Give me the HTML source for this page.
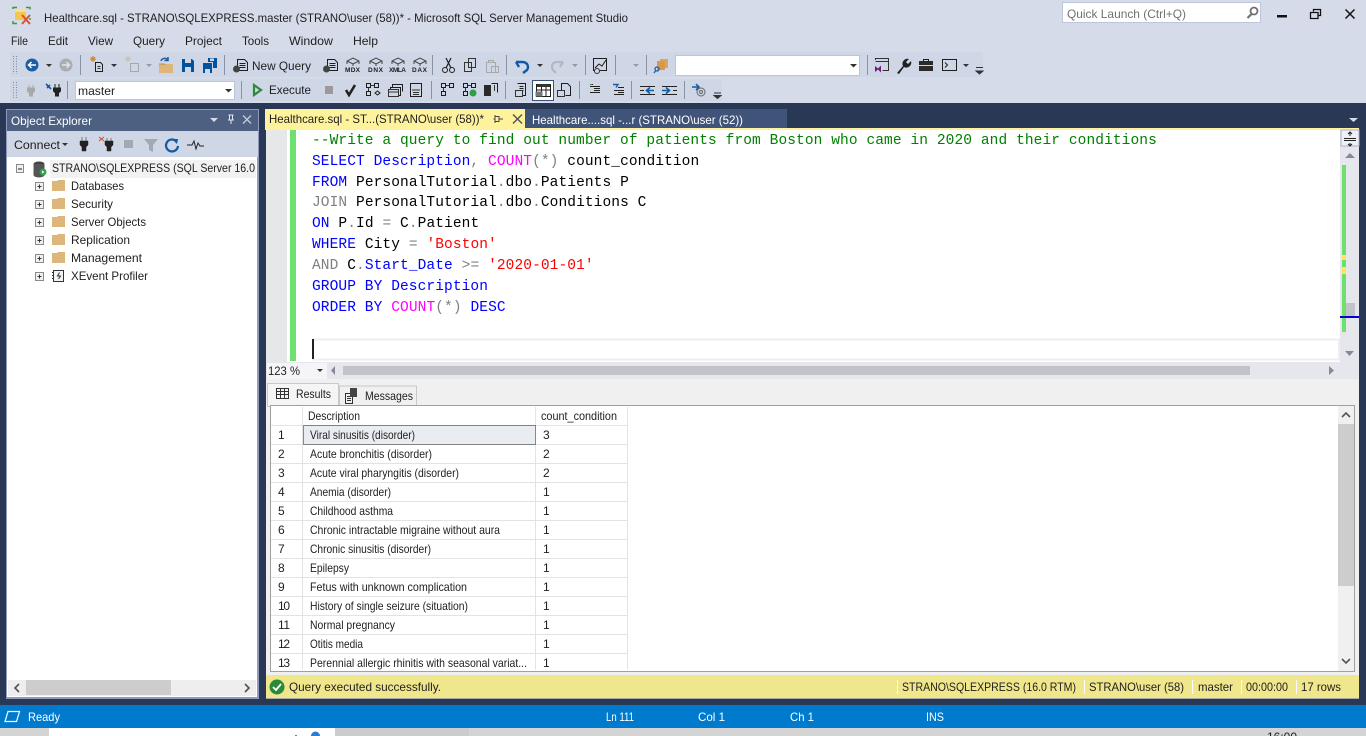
<!DOCTYPE html>
<html><head><meta charset="utf-8"><style>
html,body{margin:0;padding:0;width:1366px;height:736px;overflow:hidden;background:#293955}
svg{display:block}
text{font-family:"Liberation Sans",sans-serif;font-size:12px;fill:#1e1e1e;white-space:pre}
.c text,text.c{font-family:"Liberation Mono",monospace;font-size:14.52px;fill:#000;letter-spacing:.09px}
.k{fill:#0000ff}.g{fill:#808080}.m{fill:#ff00ff}.r{fill:#ff0000}
.w text{fill:#fff}
.ic{fill:none;stroke:#1e1e1e;stroke-width:1}
.gr{fill:none;stroke:#a8a8a8;stroke-width:1}
</style></head><body>
<svg width="1366" height="736" viewBox="0 0 1366 736" xmlns="http://www.w3.org/2000/svg">
<!-- chrome -->
<rect width="1366" height="103" fill="#d6dbe9"/>
<rect y="103" width="1366" height="603" fill="#293955"/>
<rect y="705" width="1366" height="23" fill="#007acc"/>
<rect y="728" width="1366" height="8" fill="#d4d4d4"/>
<rect x="49" y="728" width="286" height="8" fill="#fff"/>
<rect x="335" y="728" width="134" height="8" fill="#ccc"/>
<path d="M311 736a4 4 0 0 1 9 0z" fill="#2a7bd8"/>
<rect x="295" y="735" width="2" height="1" fill="#e0503c"/>
<text x="1267" y="741" font-size="11">16:00</text>

<!-- app icon -->
<g><path d="M13 9v-1.500h4M26 7.500h4v2M13 21v2.500h4M30 18v2" stroke="#3c9a3c" stroke-width="1.500" fill="none"/>
<rect x="15" y="9" width="11" height="11" fill="#f3c64d"/><rect x="15" y="9" width="11" height="3" fill="#f9de8e"/>
<path d="M22 15l8 9M30 15l-8 9" stroke="#d9532c" stroke-width="2"/></g>
<text x="44" y="22" textLength="584" lengthAdjust="spacingAndGlyphs">Healthcare.sql - STRANO\SQLEXPRESS.master (STRANO\user (58))* - Microsoft SQL Server Management Studio</text>

<!-- quick launch -->
<rect x="1062.500" y="2.500" width="198" height="20" fill="#fff" stroke="#bdc5d8"/>
<text x="1067" y="18" textLength="119" lengthAdjust="spacingAndGlyphs" style="fill:#717171">Quick Launch (Ctrl+Q)</text>
<circle cx="1254" cy="11" r="3.500" fill="none" stroke="#717171" stroke-width="1.800"/><path d="M1251.500 14l-4 4" stroke="#717171" stroke-width="2.200"/>
<rect x="1277" y="15" width="10" height="2.500" fill="#111"/>
<path d="M1313.500 11.500v-2h7v6h-2M1310.500 12.500h7.500v6h-7.500z" fill="none" stroke="#111" stroke-width="1.300"/>
<path d="M1345.500 9.500l9 9M1354.500 9.500l-9 9" stroke="#111" stroke-width="1.500"/>

<!-- menu -->
<g>
<text x="11" y="45" textLength="17" lengthAdjust="spacingAndGlyphs">File</text><text x="48" y="45" textLength="20" lengthAdjust="spacingAndGlyphs">Edit</text><text x="88" y="45" textLength="25" lengthAdjust="spacingAndGlyphs">View</text><text x="133" y="45" textLength="32" lengthAdjust="spacingAndGlyphs">Query</text><text x="185" y="45" textLength="37" lengthAdjust="spacingAndGlyphs">Project</text><text x="242" y="45" textLength="27" lengthAdjust="spacingAndGlyphs">Tools</text><text x="289" y="45" textLength="44" lengthAdjust="spacingAndGlyphs">Window</text><text x="353" y="45" textLength="25" lengthAdjust="spacingAndGlyphs">Help</text>
</g>

<!-- toolbars -->
<rect x="10" y="52" width="973" height="25" fill="#cfd6e5"/>
<rect x="10" y="79" width="712" height="22" fill="#cfd6e5"/>
<path d="M13.500 56v18M16.500 56v18M13.500 82v17M16.500 82v17" stroke="#7f8aa3" stroke-dasharray="1 1.500"/>

<!-- row 1 icons -->
<circle cx="32" cy="65" r="6.500" fill="#1c5ea6"/><path d="M36 65h-7M31.500 62l-3 3 3 3" stroke="#fff" stroke-width="1.400" fill="none"/>
<path d="M46 64h6l-3 3z" fill="#333"/>
<circle cx="66" cy="65" r="6.500" fill="#a9adb4"/><path d="M62 65h7M66.500 62l3 3-3 3" stroke="#e6e6e6" stroke-width="1.400" fill="none"/>
<path d="M80.500 55v20" stroke="#8a93a6"/>
<path d="M95.500 62.500h5l2 2v7h-7z" class="ic"/><path d="M90 59h6M93 56v6M91 57l4 4M95 57l-4 4" stroke="#c98a2b"/><path d="M97.500 66.500h3M97.500 68.500h3" stroke="#333"/>
<path d="M111 64h6l-3 3z" fill="#333"/>
<path d="M130.500 63.500h8v8h-8z" class="gr"/><path d="M125 59h6M128 56v6M126 57l4 4M130 57l-4 4" stroke="#c9c3b2"/>
<path d="M146 64h6l-3 3z" fill="#9a9a9a"/>
<path d="M159 64h14v9h-14z" fill="#dcb67a"/><path d="M159 64h5l1 1" stroke="#b9924f" fill="none"/><path d="M161 61a4 4 0 0 1 7-1M168 57v3.500h-3.500" stroke="#1c5ea6" stroke-width="1.500" fill="none"/>
<path d="M182 59h10l2 2v11h-12z" fill="#00539c"/><rect x="185" y="59" width="6" height="4" fill="#cfd6e5"/><rect x="185" y="67" width="6" height="5" fill="#cfd6e5"/>
<path d="M203 63h9v10h-9z" fill="#00539c"/><path d="M208 58h9v10h-4v-6h-5z" fill="#00539c"/><rect x="210" y="58.500" width="4" height="2.500" fill="#cfd6e5"/><rect x="205" y="69" width="5" height="4" fill="#cfd6e5"/>
<path d="M224.500 55v20" stroke="#8a93a6"/>
<path d="M237.500 59.500h7l3 3v8h-10z" class="ic"/><path d="M239.500 63.500h6M239.500 65.500h6M239.500 67.500h6" stroke="#1e1e1e"/><ellipse cx="236.500" cy="69" rx="3.500" ry="3.500" fill="#444"/>
<text x="252" y="70" textLength="59" lengthAdjust="spacingAndGlyphs">New Query</text>
<path d="M327.500 59.500h7l3 3v8h-10z" class="ic"/><path d="M329.500 63.500h6M329.500 65.500h6M329.500 67.500h6" stroke="#1e1e1e"/><ellipse cx="326.500" cy="69" rx="3.500" ry="3.500" fill="#444"/>
<g fill="none" stroke="#444"><path d="M347 64v-3l6-3 6 3v3M347 61l6 3 6-3M353 64v2"/><path d="M370 64v-3l6-3 6 3v3M370 61l6 3 6-3M376 64v2"/><path d="M392 64v-3l6-3 6 3v3M392 61l6 3 6-3M398 64v2"/><path d="M414 64v-3l6-3 6 3v3M414 61l6 3 6-3M420 64v2"/></g>
<text x="345" y="72" textLength="15" style="font-size:6.500px;font-weight:bold;fill:#222">MDX</text>
<text x="368" y="72" textLength="15" style="font-size:6.500px;font-weight:bold;fill:#222">DNX</text>
<text x="389" y="72" textLength="17" style="font-size:6.500px;font-weight:bold;fill:#222">XMLA</text>
<text x="412" y="72" textLength="15" style="font-size:6.500px;font-weight:bold;fill:#222">DAX</text>
<path d="M432.500 55v20" stroke="#8a93a6"/>
<circle cx="445" cy="70" r="2.500" class="ic"/><circle cx="452" cy="70" r="2.500" class="ic"/><path d="M446 68l5-10M451 68l-5-10" stroke="#1e1e1e" stroke-width="1.200"/>
<path d="M468.500 58.500h7v9h-7z M464.500 62.500h7v9h-7z" fill="#cfd6e5" stroke="#333"/>
<path d="M486.500 62.500h9v10h-9z M491.500 66.500h7v6h-7z M488.500 62.500v-2h5v2" class="gr"/>
<path d="M506.500 55v20" stroke="#8a93a6"/>
<path d="M516 62l3 5M516 62h6c6 0 7 5 5 8l-4 3" fill="none" stroke="#0e5aa7" stroke-width="2.400"/>
<path d="M537 64h6l-3 3z" fill="#333"/>
<path d="M563 62l-3 5M563 62h-6c-5 0-6 5-4 8l3 3" fill="none" stroke="#b4b7bd" stroke-width="2.200"/>
<path d="M572 64h6l-3 3z" fill="#9a9a9a"/>
<path d="M585.500 55v20" stroke="#8a93a6"/>
<rect x="593.500" y="58.500" width="13" height="12" class="ic"/><path d="M595 68l4-4 3 2 4-6" class="ic"/><circle cx="597" cy="71" r="2.500" fill="#cfd6e5" stroke="#333"/>
<path d="M615.500 55v20" stroke="#8a93a6"/>
<path d="M633 64h6l-3 3z" fill="#9a9a9a"/>
<path d="M646.500 55v20" stroke="#8a93a6"/>
<rect x="660" y="59" width="8" height="9" fill="#e0a458"/><rect x="657" y="61" width="8" height="9" fill="#d69a4c"/><circle cx="657" cy="69" r="2" fill="none" stroke="#1c5ea6" stroke-width="1.300"/><path d="M655.500 71l-1.500 2" stroke="#1c5ea6" stroke-width="1.300"/>
<rect x="675.500" y="55.500" width="184" height="20" fill="#fff" stroke="#bdc5d8"/>
<path d="M850 64h7l-3.500 3.500z" fill="#333"/>
<path d="M867.500 55v20" stroke="#8a93a6"/>
<path d="M875.500 60v-1.500h13v12h-6M875.500 61.500h13" fill="none" stroke="#333"/><path d="M875 66l3 2.500 3-3v7l-3-3-3 2.500z" fill="#68217a"/>
<path d="M897 73l6-7a5 5 0 0 1 6-7l-3 3 2 2 3-3a5 5 0 0 1-7 6l-5 7z" fill="#222"/>
<path d="M923.500 61.500v-2h5v2" class="ic"/><rect x="919" y="61" width="14" height="10" fill="#2a2a2a"/><rect x="919" y="65" width="14" height="1" fill="#cfd6e5"/>
<rect x="942.500" y="59.500" width="14" height="11" class="ic"/><path d="M945 62.500l2.500 2.500-2.500 2.500" class="ic"/>
<path d="M963 64h6l-3 3z" fill="#333"/>
<path d="M976 67.500h7M976 71h7l-3.500 3z" stroke="#333" fill="#333"/>

<!-- row 2 icons -->
<path d="M29 85v3M33 85v3M27.500 88h7v3l-2 2v3h-3v-3l-2-2z" fill="#a8a8a8" stroke="#a8a8a8"/>
<path d="M46 84l5 5M47 88l3-3" stroke="#0e5aa7" stroke-width="1.600"/><path d="M55 84v4M59 84v4M53.500 88h7v3l-2 2v3h-3v-3l-2-2z" fill="#222" stroke="#222"/>
<path d="M67.500 81v18" stroke="#8a93a6"/>
<rect x="75.500" y="81.500" width="159" height="18" fill="#fff" stroke="#bdc5d8"/>
<text x="78" y="95" textLength="37" lengthAdjust="spacingAndGlyphs">master</text>
<path d="M225 89h7l-3.500 3.500z" fill="#333"/>
<path d="M241.500 81v18" stroke="#8a93a6"/>
<path d="M254 85l7 5-7 5z" fill="none" stroke="#2d8a3e" stroke-width="2.200"/>
<text x="269" y="94" textLength="42" lengthAdjust="spacingAndGlyphs">Execute</text>
<rect x="325" y="86" width="8" height="8" fill="#9a9a9f"/>
<path d="M346 90l3 5 6-10" fill="none" stroke="#222" stroke-width="2.600"/>
<path d="M366.500 83.500h4v4h-4zM374.500 83.500h4v4h-4zM366.500 91.500h4v4h-4z" class="ic"/><path d="M371 85.500h3M368.500 88v3" stroke="#333"/><path d="M375 93l2.500 2 2.500-2-2.500-2z" class="ic"/>
<rect x="390.500" y="87.500" width="10" height="8" class="ic"/><rect x="388.500" y="89.500" width="10" height="7" fill="#cfd6e5" stroke="#333"/><path d="M388 92h11" stroke="#333"/><path d="M392.500 87v-2.500h10v7" class="ic"/>
<rect x="410.500" y="83.500" width="11" height="13" class="ic"/><path d="M412 90h8M413 92.500h6M413 94.500h6" stroke="#333"/>
<path d="M431.500 81v18" stroke="#8a93a6"/>
<path d="M441.500 83.500h4v4h-4zM449.500 83.500h4v4h-4zM441.500 91.500h4v4h-4z" class="ic"/><path d="M446 85.500h3M443.500 88v3" stroke="#333"/>
<path d="M463.500 83.500h4v4h-4zM471.500 83.500h4v4h-4zM463.500 91.500h4v4h-4z" class="ic"/><path d="M468 85.500h3M465.500 88v3" stroke="#333"/><circle cx="473" cy="93" r="3.500" fill="#2f9e44"/>
<rect x="484" y="85" width="7" height="11" fill="#2a2a2a"/><path d="M491.500 83.500h6v9" class="ic"/><path d="M494.500 85v6" stroke="#333"/>
<path d="M505.500 81v18" stroke="#8a93a6"/>
<path d="M517.500 83.500h8v12h-5M519.500 86.500h4M519.500 88.500h4M519.500 90.500h4" class="ic"/><rect x="515.500" y="90.500" width="7" height="6" fill="#cfd6e5" stroke="#333"/>
<rect x="532.500" y="80.500" width="21" height="20" fill="#fff" stroke="#3a5275"/>
<rect x="536" y="84" width="15" height="3" fill="#333"/><path d="M536.500 84v12.500h14V84M536.500 90h14M541.500 87v9M546 87v9" class="ic"/><rect x="535.500" y="91.500" width="7" height="5" fill="#777"/>
<path d="M561.500 90v-6.500h6l3 3v9h-5" class="ic"/><rect x="557.500" y="90.500" width="7" height="6" fill="#cfd6e5" stroke="#333"/>
<path d="M579.500 81v18" stroke="#8a93a6"/>
<path d="M590 84.500h3M590 86.500h10M594 88.500h6M594 90.500h6M590 92.500h10" stroke="#222"/><path d="M590 84.500h2" stroke="#2d8a3e"/>
<path d="M613 84.500h5l-2 3" fill="none" stroke="#1c5ea6" stroke-width="1.400"/><path d="M618 87.500h6M614 90.500h10M618 92.500h6M614 94.500h10" stroke="#222"/>
<path d="M631.500 81v18" stroke="#8a93a6"/>
<path d="M640 86.500h15M640 94.500h15M640 90.500h4" stroke="#222"/><path d="M654 90.500h-7M650 87.500l-3.500 3 3.500 3" fill="none" stroke="#0e5aa7" stroke-width="1.600"/>
<path d="M662 86.500h15M662 94.500h15M673 90.500h4" stroke="#222"/><path d="M662 90.500h7M666 87.500l3.500 3-3.500 3" fill="none" stroke="#0e5aa7" stroke-width="1.600"/>
<path d="M684.500 81v18" stroke="#8a93a6"/>
<path d="M692 87h7M696 84l3 3-3 3" fill="none" stroke="#0e5aa7" stroke-width="1.500"/><circle cx="701" cy="92" r="4" fill="none" stroke="#666"/><circle cx="701" cy="92" r="1.500" fill="none" stroke="#666"/>
<path d="M714 93h7M714 95.500h7l-3.500 3z" stroke="#333" fill="#333"/>

<!-- Object Explorer -->
<rect x="6" y="109" width="253" height="590" fill="#8e9bbc"/>
<rect x="7" y="110" width="251" height="21" fill="#4d6082"/>
<rect x="7" y="131" width="251" height="26" fill="#cfd6e5"/>
<rect x="7" y="157" width="250" height="540" fill="#fff"/>
<g class="w"><text x="11" y="125" textLength="81" lengthAdjust="spacingAndGlyphs">Object Explorer</text></g>
<path d="M210 118h8l-4 4z" fill="#d6dbe9"/>
<path d="M228.500 115h5M229.500 115v5h3v-5M228 120h6M231 120v4" fill="none" stroke="#e4e8f1"/>
<path d="M243 115.500l8 8M251 115.500l-8 8" stroke="#c4cbdc" stroke-width="1.300"/>
<text x="14" y="149" textLength="46" lengthAdjust="spacingAndGlyphs">Connect</text>
<path d="M62 143h6l-3 3z" fill="#333"/>
<path d="M82 137v4M86 137v4M80 141h8v4l-2 2v4h-4v-4l-2-2z" fill="#222" stroke="#222" stroke-width=".5"/>
<path d="M99 137l5 4M104 137l-5 4" stroke="#d14a2b"/><path d="M107 138v3M111 138v3M105 141h8v4l-2 2v4h-4v-4l-2-2z" fill="#222" stroke="#222" stroke-width=".5"/>
<rect x="124" y="140" width="9" height="8" fill="#a4a8b0"/>
<path d="M144 139h14l-5 6v7l-4-2v-5z" fill="#a4a8b0"/>
<path d="M176 141a6 6 0 1 0 2 5" fill="none" stroke="#0e5aa7" stroke-width="2.200"/><path d="M172 139l6 0-1 5z" fill="#0e5aa7"/>
<path d="M187 145h5l2-4 2 8 2-6 2 3h4" fill="none" stroke="#222"/>

<rect x="50" y="160" width="206" height="18" fill="#f2f2f2"/>
<rect x="16.500" y="164.500" width="7" height="8" fill="#f0f0f0" stroke="#8a8a8a"/><path d="M18 169h4" stroke="#222"/>
<ellipse cx="39" cy="164" rx="5.500" ry="2.500" fill="#444"/><path d="M33.500 164v11a5.500 2.500 0 0 0 11 0v-11z" fill="#555"/><circle cx="43" cy="172" r="3.500" fill="#2da44e"/><path d="M42 170.500l2.500 1.500-2.500 1.500z" fill="#fff"/>
<text x="52" y="172" textLength="203" lengthAdjust="spacingAndGlyphs">STRANO\SQLEXPRESS (SQL Server 16.0</text>
<g fill="#f0f0f0" stroke="#8a8a8a">
<rect x="35.500" y="182.500" width="8" height="8"/><rect x="35.500" y="200.500" width="8" height="8"/><rect x="35.500" y="218.500" width="8" height="8"/><rect x="35.500" y="236.500" width="8" height="8"/><rect x="35.500" y="254.500" width="8" height="8"/><rect x="35.500" y="272.500" width="8" height="8"/></g>
<path d="M37.500 186.500h4M39.500 184.500v4M37.500 204.500h4M39.500 202.500v4M37.500 222.500h4M39.500 220.500v4M37.500 240.500h4M39.500 238.500v4M37.500 258.500h4M39.500 256.500v4M37.500 276.500h4M39.500 274.500v4" stroke="#333"/>
<g fill="#dcb67a">
<path d="M52 181h5l1-1h7v11H52z"/><path d="M52 199h5l1-1h7v11H52z"/><path d="M52 217h5l1-1h7v11H52z"/><path d="M52 235h5l1-1h7v11H52z"/><path d="M52 253h5l1-1h7v11H52z"/></g>
<rect x="53.500" y="270.500" width="10" height="11" fill="#f3f3f3" stroke="#333"/><path d="M52 272.500h2M52 275.500h2M52 278.500h2" stroke="#333"/><path d="M59.500 272.500l-2 3.500h3l-2 3" fill="none" stroke="#333"/>
<text x="71" y="190" textLength="53" lengthAdjust="spacingAndGlyphs">Databases</text>
<text x="71" y="208" textLength="42" lengthAdjust="spacingAndGlyphs">Security</text>
<text x="71" y="226" textLength="75" lengthAdjust="spacingAndGlyphs">Server Objects</text>
<text x="71" y="244" textLength="59" lengthAdjust="spacingAndGlyphs">Replication</text>
<text x="71" y="262" textLength="71" lengthAdjust="spacingAndGlyphs">Management</text>
<text x="71" y="280" textLength="77" lengthAdjust="spacingAndGlyphs">XEvent Profiler</text>
<rect x="8" y="680" width="248" height="16" fill="#eee"/>
<rect x="26" y="680" width="145" height="15" fill="#cdcdcd"/>
<path d="M19 684l-4 4 4 4M245 684l4 4-4 4" fill="none" stroke="#555" stroke-width="1.700"/>

<!-- Tabs -->
<rect x="265" y="109" width="260" height="21" fill="#fff29d"/>
<rect x="525" y="109" width="262" height="19" fill="#3f5478"/>
<rect x="265" y="128" width="1094" height="2" fill="#fff29d"/>
<text x="269" y="123" textLength="215" lengthAdjust="spacingAndGlyphs">Healthcare.sql - ST...(STRANO\user (58))*</text>
<path d="M495 116.500h4v5h-4zM499 119h4M493.500 119h1.500M495 115v8" fill="none" stroke="#444"/>
<path d="M513 114.500l9 9M522 114.500l-9 9" stroke="#555" stroke-width="1.500"/>
<g class="w"><text x="532" y="124" textLength="211" lengthAdjust="spacingAndGlyphs">Healthcare....sql -...r (STRANO\user (52))</text></g>
<path d="M1349 118h9l-4.500 4z" fill="#d6dbe9"/>

<!-- Editor -->
<rect x="266" y="130" width="1093" height="233" fill="#fff"/>
<rect x="266" y="130" width="21" height="233" fill="#e6e7e8"/>
<rect x="287" y="130" width="3" height="233" fill="#fff"/>
<rect x="290" y="130" width="6" height="231" fill="#6ee06e"/>
<g class="c" xml:space="preserve">
<text x="312" y="144" style="fill:#008000">--Write a query to find out number of patients from Boston who came in 2020 and their conditions</text>
<text x="312" y="165"><tspan class="k">SELECT Description</tspan><tspan class="g">,</tspan> <tspan class="m">COUNT</tspan><tspan class="g">(*)</tspan> count_condition</text>
<text x="312" y="186"><tspan class="k">FROM</tspan> PersonalTutorial<tspan class="g">.</tspan>dbo<tspan class="g">.</tspan>Patients P</text>
<text x="312" y="206"><tspan class="g">JOIN</tspan> PersonalTutorial<tspan class="g">.</tspan>dbo<tspan class="g">.</tspan>Conditions C</text>
<text x="312" y="227"><tspan class="k">ON</tspan> P<tspan class="g">.</tspan>Id <tspan class="g">=</tspan> C<tspan class="g">.</tspan>Patient</text>
<text x="312" y="248"><tspan class="k">WHERE</tspan> City <tspan class="g">=</tspan> <tspan class="r">'Boston'</tspan></text>
<text x="312" y="269"><tspan class="g">AND</tspan> C<tspan class="g">.</tspan><tspan class="k">Start_Date</tspan> <tspan class="g">&gt;=</tspan> <tspan class="r">'2020-01-01'</tspan></text>
<text x="312" y="290"><tspan class="k">GROUP BY Description</tspan></text>
<text x="312" y="311"><tspan class="k">ORDER BY</tspan> <tspan class="m">COUNT</tspan><tspan class="g">(*)</tspan> <tspan class="k">DESC</tspan></text>
</g>
<rect x="313" y="339.500" width="1026" height="20" fill="none" stroke="#eeeef2" stroke-width="2"/>
<rect x="312" y="339" width="2" height="20" fill="#222"/>
<!-- overview scrollbar -->
<rect x="1340" y="130" width="19" height="233" fill="#e6e7ed"/>
<rect x="1341" y="130" width="18" height="16" fill="#eef0f6" stroke="#a9b2c8"/>
<path d="M1344 138.500h12M1344 140.500h12M1350 132v4M1350 143v3" stroke="#222"/><path d="M1348 134l2-2 2 2M1348 144l2 2 2-2" fill="none" stroke="#222"/>
<path d="M1345 158l5-5 5 5z" fill="#868999"/>
<rect x="1342" y="165" width="4" height="167" fill="#6ee06e"/>
<rect x="1342" y="255" width="4" height="5" fill="#ffe45c"/><rect x="1342" y="267" width="4" height="7" fill="#ffe45c"/>
<rect x="1346" y="303" width="9" height="13" fill="#c2c3c9"/>
<rect x="1340" y="316" width="19" height="2" fill="#0000cd"/>
<path d="M1345 351h9l-4.500 5z" fill="#868999"/>
<!-- hscroll -->
<rect x="266" y="362" width="1093" height="17" fill="#e6e7ed"/>
<rect x="267" y="363" width="60" height="16" fill="#f5f5f7"/>
<text x="268" y="375" textLength="32" lengthAdjust="spacingAndGlyphs">123 %</text>
<path d="M317 369h6l-3 3z" fill="#333"/>
<path d="M335 366v9l-4-4.500z" fill="#868999"/>
<rect x="343" y="366" width="907" height="9" fill="#c2c3c9"/>
<path d="M1329 366v9l5-4.500z" fill="#868999"/>

<!-- results -->
<rect x="266" y="379" width="1093" height="296" fill="#f0f0f0"/>
<rect x="339.500" y="386" width="77" height="20" fill="#f0f0f0" stroke="#c9c9c9"/>
<rect x="267.500" y="383.500" width="71" height="23" fill="#f5f5f5" stroke="#c9c9c9"/>
<rect x="276.500" y="388.500" width="12" height="10" fill="none" stroke="#333"/><path d="M276 391.500h13M276 394.500h13M280.500 389v10M284.500 389v10" stroke="#333"/>
<text x="296" y="398" textLength="35" lengthAdjust="spacingAndGlyphs">Results</text>
<path d="M345.500 393.500h7v10h-7zM352.500 391.500h1M347 396.500h4M347 398.500h4M347 400.500h4" fill="#f0f0f0" stroke="#333"/><rect x="350" y="388" width="7" height="9" fill="#444"/>
<text x="365" y="400" textLength="48" lengthAdjust="spacingAndGlyphs">Messages</text>

<rect x="270.500" y="405.500" width="1084" height="266" fill="#fff" stroke="#a0a0a0"/>
<rect x="1338" y="406" width="16" height="265" fill="#f0f0f0"/>
<rect x="1338" y="424" width="16" height="162" fill="#cdcdcd"/>
<path d="M1342 417l4-4 4 4M1342 659l4 4 4-4" fill="none" stroke="#555" stroke-width="1.600"/>
<!-- grid lines -->
<g stroke="#e3e3e3">
<path d="M271 425.500h357M271 444.500h357M271 463.500h357M271 482.500h357M271 501.500h357M271 520.500h357M271 539.500h357M271 558.500h357M271 577.500h357M271 596.500h357M271 615.500h357M271 634.500h357M271 653.500h357"/>
<path d="M302.500 407v263M535.500 407v263M627.500 407v263"/>
</g>
<rect x="303" y="426" width="233" height="18" fill="#e9edf1"/>
<rect x="303.500" y="425.500" width="232" height="19" fill="none" stroke="#222" stroke-dasharray="1 1"/>
<g>
<text x="308" y="420" textLength="52" lengthAdjust="spacingAndGlyphs">Description</text><text x="541" y="420" textLength="76" lengthAdjust="spacingAndGlyphs">count_condition</text>
<text x="278" y="439">1</text><text x="310" y="439" textLength="105" lengthAdjust="spacingAndGlyphs">Viral sinusitis (disorder)</text><text x="543" y="439">3</text>
<text x="278" y="458">2</text><text x="310" y="458" textLength="122" lengthAdjust="spacingAndGlyphs">Acute bronchitis (disorder)</text><text x="543" y="458">2</text>
<text x="278" y="477">3</text><text x="310" y="477" textLength="149" lengthAdjust="spacingAndGlyphs">Acute viral pharyngitis (disorder)</text><text x="543" y="477">2</text>
<text x="278" y="496">4</text><text x="310" y="496" textLength="81" lengthAdjust="spacingAndGlyphs">Anemia (disorder)</text><text x="543" y="496">1</text>
<text x="278" y="515">5</text><text x="310" y="515" textLength="83" lengthAdjust="spacingAndGlyphs">Childhood asthma</text><text x="543" y="515">1</text>
<text x="278" y="534">6</text><text x="310" y="534" textLength="190" lengthAdjust="spacingAndGlyphs">Chronic intractable migraine without aura</text><text x="543" y="534">1</text>
<text x="278" y="553">7</text><text x="310" y="553" textLength="121" lengthAdjust="spacingAndGlyphs">Chronic sinusitis (disorder)</text><text x="543" y="553">1</text>
<text x="278" y="572">8</text><text x="310" y="572" textLength="39" lengthAdjust="spacingAndGlyphs">Epilepsy</text><text x="543" y="572">1</text>
<text x="278" y="591">9</text><text x="310" y="591" textLength="157" lengthAdjust="spacingAndGlyphs">Fetus with unknown complication</text><text x="543" y="591">1</text>
<text x="278" y="610" textLength="12">10</text><text x="310" y="610" textLength="158" lengthAdjust="spacingAndGlyphs">History of single seizure (situation)</text><text x="543" y="610">1</text>
<text x="278" y="629" textLength="12">11</text><text x="310" y="629" textLength="85" lengthAdjust="spacingAndGlyphs">Normal pregnancy</text><text x="543" y="629">1</text>
<text x="278" y="648" textLength="12">12</text><text x="310" y="648" textLength="53" lengthAdjust="spacingAndGlyphs">Otitis media</text><text x="543" y="648">1</text>
<text x="278" y="667" textLength="12">13</text><text x="310" y="667" textLength="217" lengthAdjust="spacingAndGlyphs">Perennial allergic rhinitis with seasonal variat...</text><text x="543" y="667">1</text>
</g>

<!-- query status -->
<rect x="266" y="675" width="1093" height="23" fill="#f0e68c"/>
<rect x="266" y="698" width="1093" height="1" fill="#a8a8a8"/>
<circle cx="277" cy="687" r="7.500" fill="#2a8a3a"/><path d="M273 687l3 3 5-6" fill="none" stroke="#fff" stroke-width="1.800"/>
<text x="289" y="691" textLength="152" lengthAdjust="spacingAndGlyphs">Query executed successfully.</text>
<path d="M897.500 680v14M1084.500 680v14M1192.500 680v14M1241.500 680v14M1296.500 680v14" stroke="#fff"/>
<text x="902" y="691" textLength="174" lengthAdjust="spacingAndGlyphs">STRANO\SQLEXPRESS (16.0 RTM)</text>
<text x="1089" y="691" textLength="95" lengthAdjust="spacingAndGlyphs">STRANO\user (58)</text>
<text x="1198" y="691" textLength="35" lengthAdjust="spacingAndGlyphs">master</text>
<text x="1246" y="691" textLength="42" lengthAdjust="spacingAndGlyphs">00:00:00</text>
<text x="1301" y="691" textLength="40" lengthAdjust="spacingAndGlyphs">17 rows</text>

<!-- status bar -->
<path d="M8 711.500h11.500l-3 10H5z" fill="none" stroke="#fff" stroke-width="1.200"/>
<g class="w">
<text x="28" y="721" textLength="32" lengthAdjust="spacingAndGlyphs">Ready</text>
<text x="606" y="721" textLength="28" lengthAdjust="spacingAndGlyphs">Ln 111</text>
<text x="698" y="721" textLength="27" lengthAdjust="spacingAndGlyphs">Col 1</text>
<text x="790" y="721" textLength="24" lengthAdjust="spacingAndGlyphs">Ch 1</text>
<text x="926" y="721" textLength="18" lengthAdjust="spacingAndGlyphs">INS</text>
</g>
</svg>
</body></html>
